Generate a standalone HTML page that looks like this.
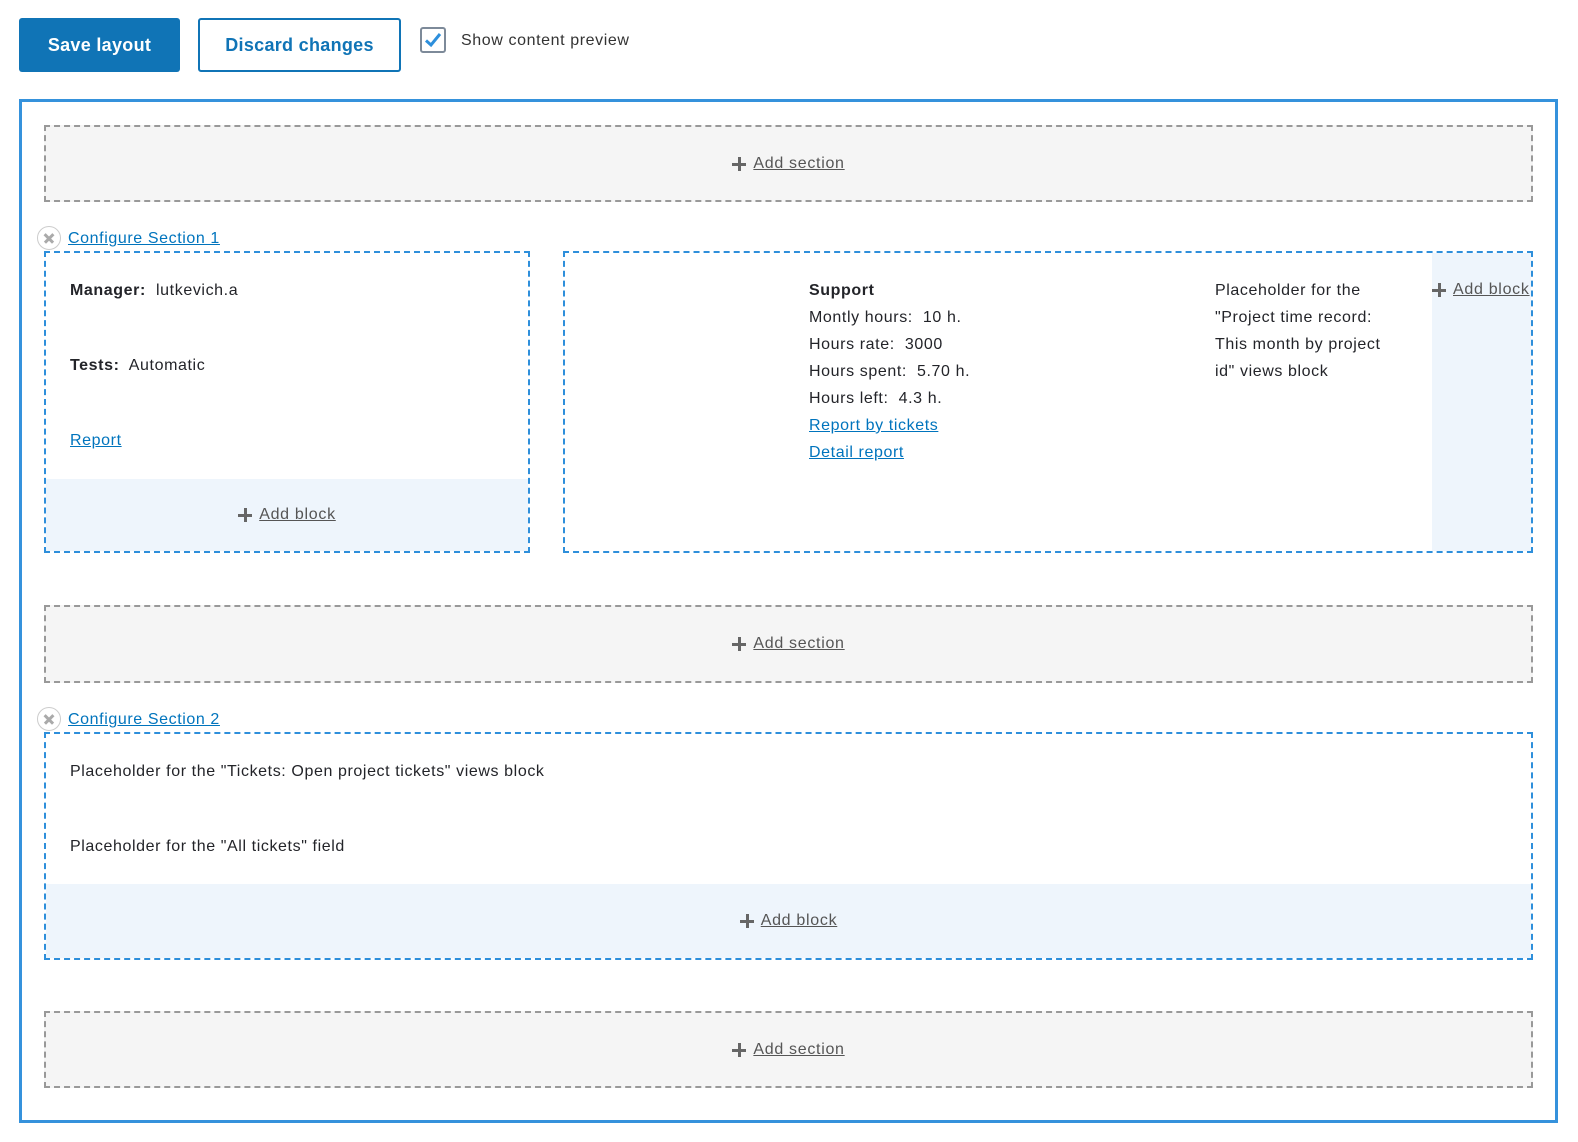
<!DOCTYPE html>
<html><head><meta charset="utf-8"><style>
*{box-sizing:border-box;margin:0;padding:0}
body{width:1578px;height:1142px;background:#fff;font-family:"Liberation Sans",sans-serif;font-size:16px;color:#232429;position:relative;overflow:hidden;letter-spacing:0.6px}
.a{position:absolute}
.btn{position:absolute;border-radius:3px;font-weight:bold;font-size:18px;display:flex;align-items:center;justify-content:center;letter-spacing:0.3px}
.frame{position:absolute;left:19px;top:99px;width:1539px;height:1024px;border:3px solid #3592dc}
.sec{position:absolute;left:44px;width:1489px;border:2px dashed #999;background:#f5f5f5;display:flex;align-items:center;justify-content:center}
.add{color:#555;font-size:16px;display:flex;align-items:center;letter-spacing:0.7px}
.add u{text-decoration:underline}
.plus{display:inline-block;width:14px;height:14px;position:relative;margin-right:7px}
.plus:before{content:"";position:absolute;left:0;top:6px;width:14px;height:3px;background:#666}
.plus:after{content:"";position:absolute;left:6px;top:0;width:3px;height:14px;background:#666}
.reg{position:absolute;border:2px dashed #2e8fdb}
.blk{position:absolute;background:#eef5fc;display:flex;align-items:center;justify-content:center}
a{color:#0074bd;text-decoration:underline}
.cfg{position:absolute;left:68px;color:#0074bd;text-decoration:underline;font-size:16px}
.x{position:absolute;left:37px;width:24px;height:24px;border:1px solid #ccc;border-radius:50%;background:#fff}
.x:before,.x:after{content:"";position:absolute;left:5px;top:10px;width:12px;height:2.5px;background:#aaa;transform:rotate(45deg)}
.x:after{transform:rotate(-45deg)}
.t{position:absolute;white-space:nowrap;line-height:20px}
</style></head><body>
<div class="btn" style="left:19px;top:18px;width:161px;height:54px;background:#1074b6;color:#fff">Save layout</div>
<div class="btn" style="left:198px;top:18px;width:203px;height:54px;border:2px solid #1074b6;color:#1074b6;background:#fff">Discard changes</div>
<div class="a" style="left:420px;top:27px;width:26px;height:26px;border:2px solid #7d8a99;border-radius:3px">
<svg width="22" height="22" viewBox="0 0 22 22" style="position:absolute;left:0;top:0"><path d="M4 11.5 L9 16 L18 5" fill="none" stroke="#2d8fdc" stroke-width="3"/></svg></div>
<div class="t" style="left:461px;top:31px;color:#333">Show content preview</div>

<div class="frame"></div>

<div class="sec" style="top:125px;height:77px"><span class="add"><span class="plus"></span><u>Add section</u></span></div>

<div class="x" style="top:226px"></div>
<div class="cfg t" style="top:229px">Configure Section 1</div>

<div class="reg" style="left:44px;top:251px;width:486px;height:302px"></div>
<div class="blk" style="left:46px;top:479px;width:482px;height:72px"><span class="add"><span class="plus"></span><u>Add block</u></span></div>
<div class="t" style="left:70px;top:281px"><b>Manager:</b>&nbsp; lutkevich.a</div>
<div class="t" style="left:70px;top:356px"><b>Tests:</b>&nbsp; Automatic</div>
<div class="t" style="left:70px;top:431px"><a>Report</a></div>

<div class="reg" style="left:563px;top:251px;width:970px;height:302px"></div>
<div class="blk" style="left:1432px;top:253px;width:99px;height:298px;align-items:flex-start;justify-content:flex-start;padding-top:28px"><span class="add"><span class="plus"></span><u>Add block</u></span></div>
<div class="t" style="left:809px;top:277px;line-height:27px"><b>Support</b><br>Montly hours:&nbsp; 10 h.<br>Hours rate:&nbsp; 3000<br>Hours spent:&nbsp; 5.70 h.<br>Hours left:&nbsp; 4.3 h.<br><a>Report by tickets</a><br><a>Detail report</a></div>
<div class="t" style="left:1215px;top:277px;line-height:27px">Placeholder for the<br>"Project time record:<br>This month by project<br>id" views block</div>

<div class="sec" style="top:605px;height:78px"><span class="add"><span class="plus"></span><u>Add section</u></span></div>

<div class="x" style="top:707px"></div>
<div class="cfg t" style="top:710px">Configure Section 2</div>

<div class="reg" style="left:44px;top:732px;width:1489px;height:228px"></div>
<div class="blk" style="left:46px;top:884px;width:1485px;height:74px"><span class="add"><span class="plus"></span><u>Add block</u></span></div>
<div class="t" style="left:70px;top:762px">Placeholder for the "Tickets: Open project tickets" views block</div>
<div class="t" style="left:70px;top:837px">Placeholder for the "All tickets" field</div>

<div class="sec" style="top:1011px;height:77px"><span class="add"><span class="plus"></span><u>Add section</u></span></div>
</body></html>
